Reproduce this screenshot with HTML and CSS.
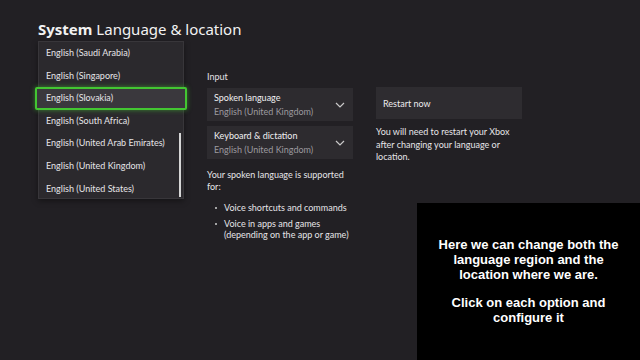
FILE: index.html
```html
<!DOCTYPE html>
<html lang="en">
  <head>
    <meta charset="UTF-8" />
    <title>Language &amp; location</title>
    <link rel="stylesheet" href="styles.css">
  </head>
  <body>
    <div class="screen">
      <h1><b>System</b> Language &amp; location</h1>
      <div class="columns">
        <div class="flyout">
          <ul class="options">
            <li>English (Saudi Arabia)</li>
            <li>English (Singapore)</li>
            <li class="focused">English (Slovakia)</li>
            <li>English (South Africa)</li>
            <li>English (United Arab Emirates)</li>
            <li>English (United Kingdom)</li>
            <li>English (United States)</li>
          </ul>
          <div class="scrollbar"></div>
        </div>

        <div class="col">
          <p class="group-label">Input</p>
          <div class="select">
            <div>
              <div class="select-title">Spoken language</div>
              <div class="select-value">English (United Kingdom)</div>
            </div>
            <svg class="chevron" width="10" height="6" viewBox="0 0 10 6"><path d="M1 1l4 4 4-4" fill="none" stroke="#c9c9c9" stroke-width="1.2"/></svg>
          </div>
          <div class="select">
            <div>
              <div class="select-title">Keyboard &amp; dictation</div>
              <div class="select-value">English (United Kingdom)</div>
            </div>
            <svg class="chevron" width="10" height="6" viewBox="0 0 10 6"><path d="M1 1l4 4 4-4" fill="none" stroke="#c9c9c9" stroke-width="1.2"/></svg>
          </div>
          <p class="note">Your spoken language is supported for:</p>
          <ul class="bullets">
            <li>Voice shortcuts and commands</li>
            <li>Voice in apps and games (depending on the app or game)</li>
          </ul>
        </div>

        <div class="col col-right">
          <button class="restart">Restart now</button>
          <p class="restart-note">You will need to restart your Xbox after changing your language or location.</p>
        </div>
      </div>
    </div>

    <div class="caption">
      <p>Here we can change both the language region and the location where we are.</p>
      <p>Click on each option and configure it</p>
    </div>
  </body>
</html>
```

FILE: styles.css
```css
* {
  box-sizing: border-box;
  margin: 0;
  padding: 0;
}
body {
  width: 640px;
  height: 360px;
  overflow: hidden;
  background: #222024;
  color: #ecebed;
  font-family: "Lato", "Noto Sans", sans-serif;
  font-size: 9px;
  position: relative;
}
.screen {
  padding: 19px 0 0 38px;
}
h1 {
  font-family: "Noto Sans", sans-serif;
  font-size: 15px;
  font-weight: 400;
  line-height: 20px;
  color: #f2f2f2;
  margin-bottom: 2px;
}
h1 b {
  font-weight: 700;
}
.columns {
  display: grid;
  grid-template-columns: 146px 146px 146px;
  column-gap: 23px;
  align-items: start;
}
.flyout {
  position: relative;
  background: #2b292d;
  border: 1px solid #38363a;
  height: 158px;
  box-shadow: 0 2px 6px rgba(0, 0, 0, 0.4);
}
.options {
  list-style: none;
}
.options li {
  height: 22.6px;
  line-height: 22.6px;
  padding-left: 7px;
  color: #e6e5e8;
  white-space: nowrap;
}
.options li.focused {
  margin: 0 -4px;
  padding-left: 9px;
  background: #3a383d;
  border: 2px solid #43c632;
  border-radius: 2px;
  line-height: 18.6px;
  box-shadow: 0 0 5px rgba(67, 198, 50, 0.6);
}
.scrollbar {
  position: absolute;
  right: 2px;
  top: 91px;
  width: 2px;
  height: 64px;
  background: #d6d6d6;
}
.group-label {
  margin-top: 25px;
  height: 22px;
  line-height: 22px;
  color: #e2e1e4;
}
.select {
  display: flex;
  align-items: center;
  justify-content: space-between;
  height: 33px;
  padding: 0 8px 0 7px;
  background: #2d2b2f;
  margin-bottom: 5px;
}
.select-title {
  line-height: 15px;
  color: #f0f0f2;
}
.select-value {
  line-height: 14px;
  color: #9c9a9f;
}
.chevron {
  margin-top: 1px;
}
.note {
  margin-top: 10px;
  line-height: 12px;
  color: #e6e5e8;
  padding-right: 8px;
}
.bullets {
  margin-top: 9px;
  padding-left: 17px;
  list-style: none;
}
.bullets li {
  position: relative;
  line-height: 11.5px;
  margin-bottom: 4px;
  color: #e6e5e8;
}
.bullets li::before {
  content: "";
  position: absolute;
  left: -9px;
  top: 5px;
  width: 2px;
  height: 2px;
  background: #cfcfcf;
  border-radius: 50%;
}
.col-right {
  padding-top: 46px;
}
.restart {
  display: block;
  width: 100%;
  height: 32px;
  padding-left: 7px;
  text-align: left;
  border: none;
  background: #2e2c30;
  color: #ecebed;
  font-family: inherit;
  font-size: 9px;
}
.restart-note {
  margin-top: 7px;
  line-height: 12.5px;
  color: #e6e5e8;
  padding-right: 6px;
}
.caption {
  position: absolute;
  left: 417px;
  top: 203px;
  width: 223px;
  height: 157px;
  background: #000;
  color: #fff;
  font-family: "Liberation Sans", Arial, sans-serif;
  font-weight: 700;
  font-size: 13px;
  line-height: 15px;
  text-align: center;
  padding: 34px 12px 0;
}
.caption p + p {
  margin-top: 13px;
}
```
